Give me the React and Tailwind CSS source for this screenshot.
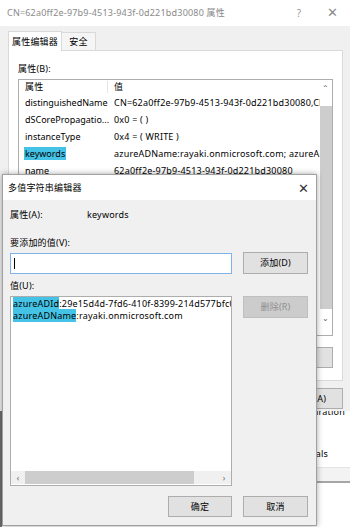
import React from "react";

const font = "font-['Noto_Sans','Noto_Sans_CJK_SC',sans-serif] tracking-[0.2px]";

function WinButton({ children, className = "" }) {
  return (
    <div
      className={`h-[21px] flex items-center justify-center border border-[#adadad] bg-[#e1e1e1] text-[9px] leading-[12px] text-black ${className}`}
    >
      {children}
    </div>
  );
}

/* ---------------- back window: properties ---------------- */
function PropertiesWindow() {
  const rows = [
    ["distinguishedName", "CN=62a0ff2e-97b9-4513-943f-0d221bd30080,CN=Users"],
    ["dSCorePropagatio...", "0x0 = ( )"],
    ["instanceType", "0x4 = ( WRITE )"],
    ["keywords", "azureADName:rayaki.onmicrosoft.com; azureADId:29e15d4d"],
    ["name", "62a0ff2e-97b9-4513-943f-0d221bd30080"],
    ["objectCategory", "CN=Person,CN=Schema,CN=Configuration"],
    ["objectClass", "top; person; organizationalPerson; user"],
  ];

  return (
    <div className="h-[411px] bg-[#f0f0f0] flex flex-col shrink-0">
      {/* title bar */}
      <div className="h-[26px] bg-white flex items-center pl-[7px] text-[9px] text-[#8a8a8a]">
        <span className="whitespace-nowrap">CN=62a0ff2e-97b9-4513-943f-0d221bd30080 属性</span>
        <span className="ml-auto w-[12px] text-center text-[10px] text-[#9a9a9a]">?</span>
        <span className="ml-[22px] mr-[13px] w-[10px] text-center text-[13px] font-light text-[#8a8a8a]">✕</span>
      </div>

      {/* tabs */}
      <div className="flex items-end pl-[8px] pt-[5px] text-[9px] leading-[12px] text-black">
        <div className="h-[20px] w-[54px] bg-white border border-b-0 border-[#d9d9d9] flex items-center justify-center relative z-10 -mb-px">
          属性编辑器
        </div>
        <div className="h-[18px] w-[34px] bg-[#f5f5f5] border border-l-0 border-b-0 border-[#d9d9d9] flex items-center justify-center">
          安全
        </div>
      </div>

      {/* tab panel */}
      <div className="ml-[8px] mr-[7px] h-[331px] bg-white border border-[#d9d9d9] px-[9px] pt-[12px] flex flex-col text-[9px] leading-[12px]">
        <div>属性(B):</div>
        <div className="mt-[4px] h-[257px] border border-[#adadad] flex overflow-hidden">
          <div className="flex-1 min-w-0 flex flex-col">
            <div className="h-[14px] shrink-0 grid grid-cols-[89px_1fr] items-center">
              <div className="pl-[6px] border-r border-[#e5e5e5]">属性</div>
              <div className="pl-[6px]">值</div>
            </div>
            {rows.map(([k, v]) => (
              <div key={k} className="h-[17px] shrink-0 grid grid-cols-[89px_1fr] items-center whitespace-nowrap">
                <div className="pl-[5px] tracking-normal">
                  <span className={k === "keywords" ? "bg-[#45c3e6] px-px" : "px-px"}>{k}</span>
                </div>
                <div className="pl-[6px] overflow-hidden">{v}</div>
              </div>
            ))}
          </div>
          {/* vertical scrollbar */}
          <div className="w-[12px] bg-[#f0f0f0] flex flex-col items-center text-[8px] text-[#606060]">
            <div className="h-[15px] w-full bg-white flex items-center justify-center">⌃</div>
            <div className="h-[11px] w-full bg-white" />
            <div className="flex-1 w-[12px] bg-[#cdcdcd]" />
            <div className="h-[17px] w-full bg-white flex items-center justify-center">⌄</div>
            <div className="h-[9px] w-full bg-white" />
          </div>
        </div>
        <div className="mt-[11px] flex justify-end">
          <WinButton className="w-[64px]">编辑(E)</WinButton>
        </div>
      </div>

      {/* window buttons */}
      <div className="mt-[7px] mr-[7px] flex justify-end gap-[7px]">
        <WinButton className="w-[64px] h-[20px]">确定</WinButton>
        <WinButton className="w-[64px] h-[20px]">取消</WinButton>
        <WinButton className="w-[64px] h-[20px]">应用(A)</WinButton>
      </div>
    </div>
  );
}

/* ---------------- app behind everything ---------------- */
function BackgroundApp() {
  return (
    <div className="flex-1 bg-white flex flex-col overflow-hidden text-[9px] leading-[12px] text-black border-l-[2px] border-[#6f6f6f]">
      <div className="-mt-[5px] pr-[5px] text-right whitespace-nowrap">CN=Configuration</div>
      <div className="mt-[30px] pr-[22px] text-right whitespace-nowrap">Well Known Security Principals</div>
      <div className="mt-[7px] h-[16px] border-t border-[#e3e3e3] border-b-[2px] border-b-[#a5a5a5] bg-[#f3f3f3]" />
    </div>
  );
}

/* ---------------- foreground dialog ---------------- */
function MultiValueEditor() {
  return (
    <div className="absolute left-[2px] top-[174px] w-[315px] h-[352px] bg-[#f0f0f0] border border-[#a0a0a0] shadow-[0_0_6px_rgba(0,0,0,0.35)] flex flex-col text-[9px] leading-[12px] text-black">
      <div className="h-[25px] bg-white flex items-center pl-[5px] shrink-0">
        <span>多值字符串编辑器</span>
        <span className="ml-auto mr-[7px] text-[13px] font-light text-[#333]">✕</span>
      </div>

      <div className="flex flex-col pl-[7px] pr-[8px]">
        <div className="mt-[9px] flex">
          <span className="w-[77px]">属性(A):</span>
          <span>keywords</span>
        </div>

        <div className="mt-[16px]">要添加的值(V):</div>
        <div className="mt-[3px] flex items-center justify-between">
          <div className="h-[21px] w-[222px] bg-white border border-[#7eb4ea] flex items-center pl-[3px]">
            <div className="w-px h-[11px] bg-black" />
          </div>
          <WinButton className="w-[65px] h-[22px]">添加(D)</WinButton>
        </div>

        <div className="mt-[6px]">值(U):</div>
        <div className="mt-[4px] flex items-start justify-between">
          <div className="h-[190px] w-[222px] bg-white border border-[#adadad] flex flex-col overflow-hidden">
            <div className="flex-1 pl-[2px] pt-[1px] whitespace-nowrap">
              <div>
                <span className="bg-[#45c3e6]">azureADId</span>:29e15d4d-7fd6-410f-8399-214d577bfc08
              </div>
              <div>
                <span className="bg-[#45c3e6]">azureADName</span>:rayaki.onmicrosoft.com
              </div>
            </div>
            {/* horizontal scrollbar */}
            <div className="h-[13px] mb-[1px] flex items-stretch bg-[#f0f0f0] text-[8px] text-[#606060]">
              <div className="w-[14px] flex items-center justify-center">‹</div>
              <div className="w-[169px] bg-[#cdcdcd]" />
              <div className="flex-1" />
              <div className="w-[14px] flex items-center justify-center">›</div>
            </div>
          </div>
          <div className="h-[22px] w-[65px] flex items-center justify-center border border-[#bfbfbf] bg-[#cccccc] text-[#8f8f8f]">
            删除(R)
          </div>
        </div>

        <div className="mt-[10px] flex justify-end gap-[11px]">
          <WinButton className="w-[64px] border-[#0078d7]">确定</WinButton>
          <WinButton className="w-[65px]">取消</WinButton>
        </div>
      </div>
    </div>
  );
}

export default function App() {
  return (
    <div className={`relative w-[350px] h-[527px] overflow-hidden flex flex-col ${font}`}>
      <PropertiesWindow />
      <BackgroundApp />
      <MultiValueEditor />
    </div>
  );
}
